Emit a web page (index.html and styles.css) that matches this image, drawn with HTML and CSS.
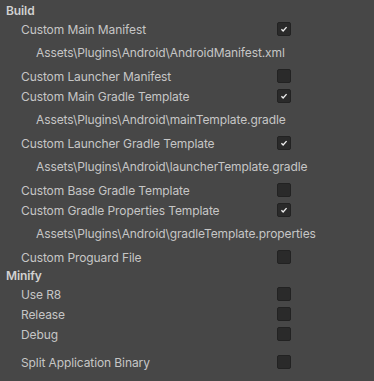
FILE: index.html
```html
<!DOCTYPE html>
<html lang="en">
<head>
    <meta charset="UTF-8">
    <title>Publishing Settings</title>
    <link rel="stylesheet" href="styles.css">
</head>
<body>
    <div class="panel">
        <div class="header">Build</div>
        <div class="row">
            <span class="label">Custom Main Manifest</span>
            <span class="toggle on"><svg viewBox="0 0 14 14"><polyline points="4,7.2 6,9.2 10,4.8"/></svg></span>
        </div>
        <div class="path">Assets\Plugins\Android\AndroidManifest.xml</div>
        <div class="row">
            <span class="label">Custom Launcher Manifest</span>
            <span class="toggle"></span>
        </div>
        <div class="row">
            <span class="label">Custom Main Gradle Template</span>
            <span class="toggle on"><svg viewBox="0 0 14 14"><polyline points="4,7.2 6,9.2 10,4.8"/></svg></span>
        </div>
        <div class="path">Assets\Plugins\Android\mainTemplate.gradle</div>
        <div class="row">
            <span class="label">Custom Launcher Gradle Template</span>
            <span class="toggle on"><svg viewBox="0 0 14 14"><polyline points="4,7.2 6,9.2 10,4.8"/></svg></span>
        </div>
        <div class="path">Assets\Plugins\Android\launcherTemplate.gradle</div>
        <div class="row">
            <span class="label">Custom Base Gradle Template</span>
            <span class="toggle"></span>
        </div>
        <div class="row">
            <span class="label">Custom Gradle Properties Template</span>
            <span class="toggle on"><svg viewBox="0 0 14 14"><polyline points="4,7.2 6,9.2 10,4.8"/></svg></span>
        </div>
        <div class="path">Assets\Plugins\Android\gradleTemplate.properties</div>
        <div class="row last">
            <span class="label">Custom Proguard File</span>
            <span class="toggle"></span>
        </div>

        <div class="header">Minify</div>
        <div class="row">
            <span class="label">Use R8</span>
            <span class="toggle"></span>
        </div>
        <div class="row">
            <span class="label">Release</span>
            <span class="toggle"></span>
        </div>
        <div class="row">
            <span class="label">Debug</span>
            <span class="toggle"></span>
        </div>

        <div class="row spaced">
            <span class="label">Split Application Binary</span>
            <span class="toggle"></span>
        </div>
    </div>
</body>
</html>
```
FILE: styles.css
```css
* {
    margin: 0;
    padding: 0;
    box-sizing: border-box;
}

body {
    background: #474747;
    color: #c6c6c6;
    font-family: Inter, "Noto Sans", sans-serif;
    font-size: 12px;
    letter-spacing: -0.1px;
}

.panel {
    padding-top: 2px;
    width: 374px;
}

.header {
    height: 18px;
    line-height: 18px;
    padding-left: 6px;
    font-weight: 600;
    color: #d2d2d2;
}

.row {
    display: flex;
    align-items: center;
    height: 18px;
    margin-bottom: 2px;
    padding-left: 21px;
}

.row.last {
    margin-bottom: 1px;
}

.row.spaced {
    margin-top: 10px;
}

.label {
    width: 256px;
    white-space: nowrap;
}

.path {
    height: 25px;
    line-height: 25px;
    margin-bottom: 2px;
    padding-left: 36px;
    white-space: nowrap;
}

.toggle {
    width: 14px;
    height: 14px;
    background: #2a2a2a;
    border: 1px solid #222;
    border-radius: 2px;
    display: flex;
    align-items: center;
    justify-content: center;
}

.toggle svg {
    width: 14px;
    height: 14px;
    fill: none;
    stroke: #eeeeee;
    stroke-width: 1.6;
}
```
